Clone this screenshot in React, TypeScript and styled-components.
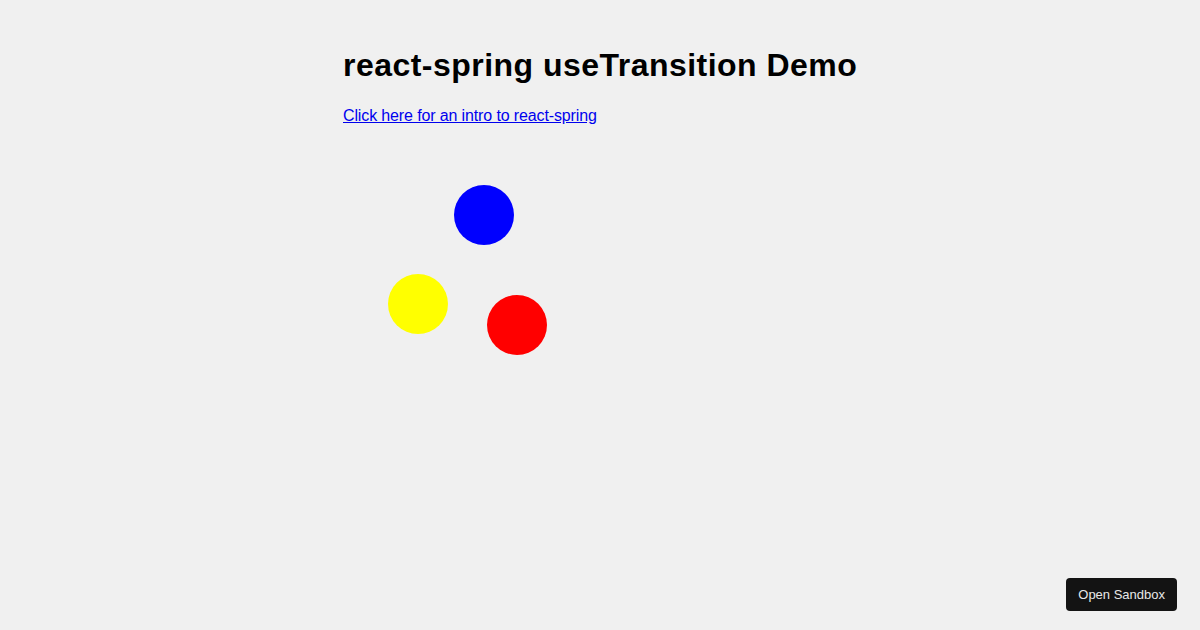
import React, { FC } from 'react';
import styled, { createGlobalStyle } from 'styled-components';

const GlobalStyle = createGlobalStyle`
    html, body {
        margin: 0;
        padding: 0;
        background: #f0f0f0;
    }

    body {
        font-family: 'Liberation Sans', Arial, sans-serif;
        color: #000000;
    }
`;

const Page = styled.div`
    min-height: 630px;
    padding-top: 47px;
    box-sizing: border-box;
`;

const Container = styled.main`
    width: 514px;
    margin: 0 auto;
`;

const Title = styled.h1`
    font-size: 32px;
    font-weight: 700;
    letter-spacing: 0.47px;
    margin: 0 0 23px;
    white-space: nowrap;
`;

const IntroLink = styled.a`
    font-size: 16px;
    letter-spacing: -0.13px;
    color: #0000ee;
    text-decoration: underline;
`;

const Stage = styled.div`
    position: relative;
    height: 260px;
    margin-top: 60px;
`;

const Circle = styled.div<{ $fill: string; $x: number; $y: number }>`
    position: absolute;
    left: ${(p) => p.$x}px;
    top: ${(p) => p.$y}px;
    width: 60px;
    height: 60px;
    border-radius: 50%;
    background: ${(p) => p.$fill};
`;

const SandboxButton = styled.button`
    position: fixed;
    right: 23px;
    bottom: 19px;
    height: 33px;
    padding: 0 12px;
    border: none;
    border-radius: 4px;
    background: #131313;
    color: #e8e8e8;
    font-family: 'Liberation Sans', Arial, sans-serif;
    font-size: 13px;
    cursor: pointer;
`;

const circles = [
    { fill: '#0000ff', x: 111, y: 0 },
    { fill: '#ffff00', x: 45, y: 89 },
    { fill: '#ff0000', x: 144, y: 110 },
];

const App: FC = () => (
    <Page>
        <GlobalStyle />
        <Container>
            <Title>react-spring useTransition Demo</Title>
            <IntroLink href="#">Click here for an intro to react-spring</IntroLink>
            <Stage>
                {circles.map((c) => (
                    <Circle key={c.fill} $fill={c.fill} $x={c.x} $y={c.y} />
                ))}
            </Stage>
        </Container>
        <SandboxButton type="button">Open Sandbox</SandboxButton>
    </Page>
);

export default App;
